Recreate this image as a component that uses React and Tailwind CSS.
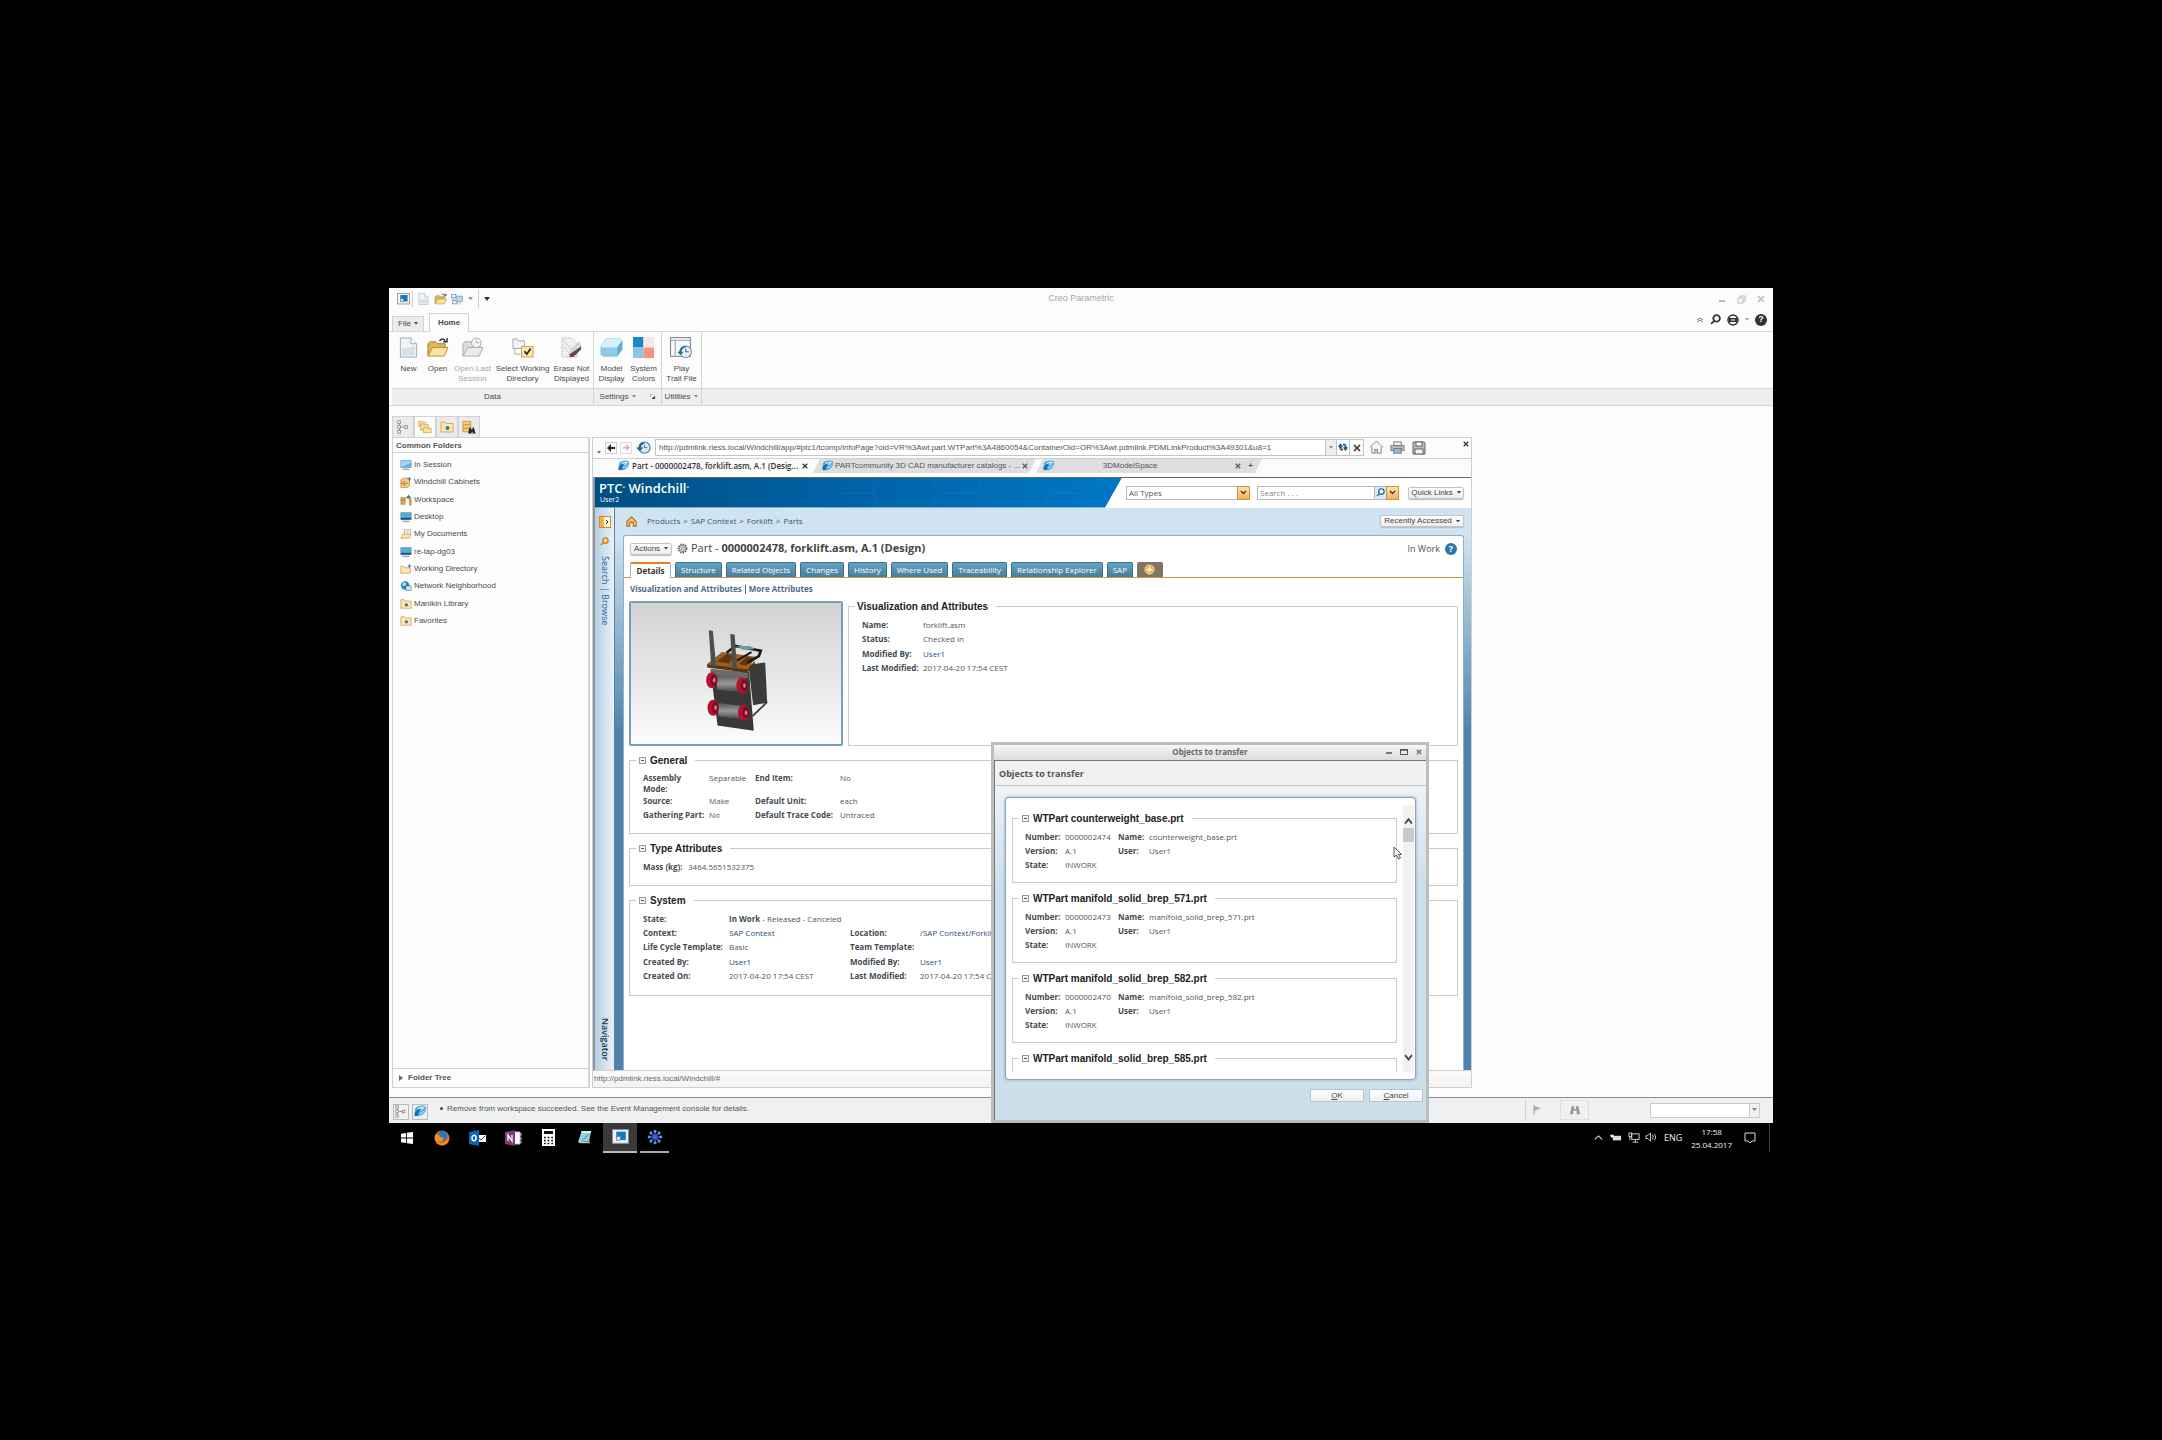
import React from "react";

const label = "font-bold text-[#444b52]";
const link = "text-[#1f4e80]";

/* ---------- small icons ---------- */
const Caret = ({ className = "w-[5px]" }) => (
  <svg viewBox="0 0 6 4" className={className} aria-hidden="true"><path d="M0 0h6L3 4z" fill="currentColor" /></svg>
);
const PageIcon = ({ className }) => (
  <svg viewBox="0 0 20 22" className={className}>
    <path d="M1.500 1h11l6 6v14h-17z" fill="#eef3f7" stroke="#9fa9b1" />
    <path d="M12.500 1v6h6" fill="#fff" stroke="#9fa9b1" />
    <path d="M3 12c5 0 9-1 14-3v10H3z" fill="#d5e0e9" />
  </svg>
);
const FolderOpen = ({ className, gray }) => (
  <svg viewBox="0 0 24 22" className={className}>
    <path d="M2 20V7l2-2h6l2 2h8v5" fill={gray ? "#dcdcdc" : "#e3b457"} stroke={gray ? "#aaa" : "#a97b2c"} />
    <path d="M2 20l5-9h16l-4 9z" fill={gray ? "#eaeaea" : "#fbe3a4"} stroke={gray ? "#aaa" : "#b98a36"} />
    {gray ? (
      <g fill="#f5f5f5" stroke="#aaa"><circle cx="16" cy="6" r="5" /><path d="M16 3v3h3" fill="none" /></g>
    ) : (
      <path d="M14 4c3-3 5-2 6 0m2-3v4h-4" fill="none" stroke="#333" strokeWidth="1.500" />
    )}
  </svg>
);
const WindowsStack = ({ className }) => (
  <svg viewBox="0 0 22 20" className={className} fill="#e8f2fa" stroke="#46799f">
    <rect x="1" y="1" width="8" height="6" /><rect x="3" y="12" width="8" height="6" /><rect x="9" y="4" width="12" height="10" rx="1" fill="#b9dbf1" />
    <path d="M14 18h4M4 7v5" />
  </svg>
);
const CreoIcon = ({ className }) => (
  <svg viewBox="0 0 16 14" className={className}>
    <rect x=".5" y=".5" width="15" height="13" fill="#f4f4f4" stroke="#8b8f93" />
    <rect x="4" y="2.500" width="9" height="8" fill="#1779bd" /><rect x="4" y="7" width="4" height="3.500" fill="#d7e6f1" stroke="#50738d" strokeWidth=".6" />
  </svg>
);
const SelectDirIcon = ({ className }) => (
  <svg viewBox="0 0 24 22" className={className}>
    <path d="M2 2h4l1 2h7v8H2z" fill="#f2f2f2" stroke="#a9a9a9" />
    <path d="M4 12v6h6" fill="none" stroke="#a9a9a9" />
    <rect x="11" y="10" width="12" height="11" fill="#fbe7a9" stroke="#c8a350" />
    <path d="M14 15l2.500 3 4-6" fill="none" stroke="#222" strokeWidth="1.800" />
  </svg>
);
const EraseIcon = ({ className }) => (
  <svg viewBox="0 0 24 22" className={className}>
    <path d="M2 1h10l6 6v14H2z" fill="#efefef" stroke="#bbb" strokeDasharray="2 1" />
    <path d="M3 3l10 11M3 10l8 8" stroke="#ccc" />
    <path d="M11 14l9-9 2 5-9 9z" fill="#d9d9d9" stroke="#aaa" strokeWidth=".6" />
    <path d="M10 18l12-8v3L14 21h-3z" fill="#5f4a4f" /><path d="M10 17l4 4h-4z" fill="#b3303d" />
  </svg>
);
const ModelIcon = ({ className }) => (
  <svg viewBox="0 0 24 20" className={className}>
    <path d="M6 1h15l2 2v9l-5 7H3l-2-2V9z" fill="#8ccbec" stroke="#6ea7c8" strokeWidth=".6" />
    <path d="M6 1h15l2 2-5 7H2l-1-1z" fill="#d7effa" /><path d="M18 10l5-7v9l-5 7z" fill="#62aedb" />
  </svg>
);
const ColorsIcon = ({ className }) => (
  <svg viewBox="0 0 20 20" className={className}>
    <rect width="10" height="10" fill="#1f86c6" /><rect x="10" width="10" height="10" fill="#f9e6e6" />
    <rect y="10" width="10" height="10" fill="#8cc3e6" /><rect x="10" y="10" width="10" height="10" fill="#f59483" />
  </svg>
);
const TrailIcon = ({ className }) => (
  <svg viewBox="0 0 22 20" className={className}>
    <rect x=".5" y=".5" width="19" height="18" fill="#f8f8f8" stroke="#7e8488" /><path d="M1 3h18M5 3v15" stroke="#9aa0a4" />
    <circle cx="15" cy="14" r="5.500" fill="#e5f0f8" stroke="#5b8fb1" /><path d="M15 8.500a5.500 5.500 0 00-6 5.500H7l3 3.500 3-3.500h-2a4 4 0 014-4z" fill="#1f6c9f" /><path d="M15 11v3h3" fill="none" stroke="#667" />
  </svg>
);
const ClockBack = ({ className }) => (
  <svg viewBox="0 0 16 14" className={className}>
    <circle cx="9" cy="7" r="6" fill="#dcebf5" stroke="#3d81a8" strokeWidth="1.200" />
    <path d="M9 1a6 6 0 00-6 6H0l4 4 4-4H5.500A4 4 0 019 3z" fill="#1d6d99" /><path d="M9 4v3h3" fill="none" stroke="#666" />
  </svg>
);
const TreeIcon = ({ className }) => (
  <svg viewBox="0 0 14 16" className={className} fill="#fff" stroke="#888">
    <path d="M3 4v9M5 8h4" /><rect x="1" y="1" width="3" height="3" /><rect x="1" y="6.500" width="3" height="3" /><rect x="1" y="12" width="3" height="3" /><rect x="9" y="6.500" width="3" height="3" />
  </svg>
);
const FoldersIcon = ({ className }) => (
  <svg viewBox="0 0 16 15" className={className} fill="#fbe2a1" stroke="#c79a44" strokeWidth=".8">
    <path d="M1 1h3l1 1h4v5H1z" /><path d="M3 4h3l1 1h5v6H3z" /><path d="M6 8h3l1 1h5v5H6z" />
  </svg>
);
const WorkFolder = ({ className }) => (
  <svg viewBox="0 0 14 12" className={className}>
    <path d="M1 3h4l1 1.500h6V11H1z" fill="#fbe8b5" stroke="#c79a44" strokeWidth=".8" /><path d="M9 2.500h4M11 .5v4" stroke="#2b7ba7" strokeWidth="1.200" />
  </svg>
);
const FavFolder = ({ className }) => (
  <svg viewBox="0 0 14 12" className={className}>
    <path d="M1 1h4l1 1.500h7V11H1z" fill="#fbe8b5" stroke="#c79a44" strokeWidth=".8" /><circle cx="7.500" cy="7" r="2" fill="#2b7ba7" />
  </svg>
);
const FindCabinet = ({ className }) => (
  <svg viewBox="0 0 16 15" className={className}>
    <path d="M1 1h9v12H1z" fill="#f3cd78" stroke="#b98a36" strokeWidth=".8" /><path d="M1 5h9M1 9h9" stroke="#b98a36" />
    <path d="M7 15l1.500-7H10v2h2V8h1.500l2 7h-3.500v-2h-1v2z" fill="#222" />
  </svg>
);
const Globe = ({ className }) => (
  <svg viewBox="0 0 14 13" className={className}>
    <path d="M1 4c2-3 7-4 11-3 2 1 1 6-1 8-3 3-8 4-10 2z" fill="#56aee2" /><path d="M4 4c2-2 5-2 8-2L8 6z" fill="#d9effb" /><path d="M1 12C-1 7 4 4 9 4 6 5 4 8 5 11z" fill="#1b6fae" /><path d="M6 9c2 0 4-1 5-3" stroke="#d9effb" fill="none" />
  </svg>
);
const Monitor = ({ className, dark }) => (
  <svg viewBox="0 0 14 12" className={className}>
    <rect x="1" y="1" width="12" height="8" fill={dark ? "#58abd8" : "#9ed8f4"} stroke="#5c8fae" strokeWidth=".8" />
    <path d={dark ? "M1 9V7h12v2z" : "M1 9L13 3v6z"} fill={dark ? "#1a4f74" : "#5cb6e4"} /><path d="M3 11h8" stroke="#889" strokeWidth="1.200" />
  </svg>
);
const Cabinet = ({ className }) => (
  <svg viewBox="0 0 14 13" className={className}>
    <path d="M1 4l3-2h7v9l-2 2H1z" fill="#f4cd82" stroke="#bb8634" strokeWidth=".8" /><path d="M1 8h8M4 6h2M4 10h2" stroke="#a06a1c" /><path d="M9 3h4M11 1v4" stroke="#2b7ba7" strokeWidth="1.200" />
  </svg>
);
const Workspace = ({ className }) => (
  <svg viewBox="0 0 14 12" className={className}>
    <path d="M1 3h5v8H1zM7 3h5v1H7zM11 4h2v8h-2z" fill="#dba956" stroke="#9c7230" strokeWidth=".6" /><path d="M1 6h5" stroke="#9c7230" /><path d="M8 2h4M10 0v4" stroke="#2b7ba7" strokeWidth="1.200" />
  </svg>
);
const DocsFolder = ({ className }) => (
  <svg viewBox="0 0 14 12" className={className}>
    <rect x="5" y="1" width="7" height="7" fill="#fff" stroke="#999" strokeWidth=".8" /><path d="M6.500 3h4M6.500 5h4" stroke="#999" strokeWidth=".6" />
    <path d="M1 11l2-5h10l-2 5z" fill="#fbe2a1" stroke="#c79a44" strokeWidth=".8" />
  </svg>
);
const NetGlobe = ({ className }) => (
  <svg viewBox="0 0 14 12" className={className}>
    <circle cx="6" cy="5.500" r="5" fill="#2c86c2" /><path d="M3 3c2-2 4-1 4 1s-3 1-4 3" fill="#bfe3f7" /><rect x="7" y="6" width="6" height="5" fill="#cfe9f8" stroke="#4b7fa3" strokeWidth=".7" />
  </svg>
);
const Gear = ({ className }) => (
  <svg viewBox="0 0 16 16" className={className} fill="none" stroke="#555">
    <circle cx="8" cy="8" r="6" strokeWidth="2.400" strokeDasharray="2 1.500" /><circle cx="8" cy="8" r="4.600" fill="#eee" /><circle cx="8" cy="8" r="2" fill="#fff" />
  </svg>
);
const Cross = ({ className = "w-[6px]" }) => (
  <svg viewBox="0 0 8 8" className={className}><path d="M1 1l6 6M7 1L1 7" stroke="currentColor" strokeWidth="1.600" /></svg>
);
const Binoculars = ({ className }) => (
  <svg viewBox="0 0 14 13" className={className} fill="currentColor"><path d="M1 12l2-9 2-1 1 1v3h2V3l1-1 2 1 2 9H9V8H5v4z" /></svg>
);

/* ---------- Creo ribbon ---------- */
function RibbonButton({ icon: Icon, lines, width, muted, gray }) {
  return (
    <button type="button" className={`${width} flex shrink-0 flex-col items-center text-[8px] leading-[10px] ${muted ? "text-[#a9a9a9]" : "text-[#4a4a4a]"}`}>
      <span className="mb-[5px] flex h-[22px] items-center"><Icon className="h-[21px] w-[23px]" gray={gray} /></span>
      {lines.map((l) => <span key={l} className="whitespace-nowrap">{l}</span>)}
    </button>
  );
}
function Group({ width, name, caret, launcher, children }) {
  return (
    <div className={`${width} flex shrink-0 flex-col border-r border-[#d4d6d8]`}>
      <div className="flex h-[56px] justify-center pt-[5px]">{children}</div>
      <div className="flex h-[17px] items-center justify-center gap-[4px] border-t border-[#d4d6d8] bg-[#eceeef] text-[8px] text-[#4a4a4a]">
        <span>{name}</span>
        {caret && <Caret className="w-[4px] text-[#888]" />}
        {launcher && <svg viewBox="0 0 6 6" className="ml-[10px] w-[5px]"><path d="M0 0v4M0 0h3" stroke="#777" /><path d="M6 6H2l4-4z" fill="#333" /></svg>}
      </div>
    </div>
  );
}

function CreoHeader() {
  return (
    <header>
      <div className="grid h-[26px] grid-cols-[1fr_auto_1fr] items-center px-[8px] pb-[3px]">
        <div className="flex items-center text-[#555]">
          <CreoIcon className="w-[13px]" />
          <span className="ml-[2px] h-[16px] border-l border-[#ccc]" />
          <PageIcon className="ml-[5px] h-[12px]" />
          <FolderOpen className="ml-[5px] h-[12px]" />
          <WindowsStack className="ml-[4px] h-[11px]" />
          <Caret className="ml-[5px] w-[5px] text-[#999]" />
          <span className="ml-[5px] h-[18px] border-l border-[#ccc]" />
          <Caret className="ml-[5px] w-[6px] text-[#333]" />
        </div>
        <h1 className="text-[9px] text-[#a6a6a6]">Creo Parametric</h1>
        <div className="flex items-center justify-end gap-[11px] text-[#bbb]">
          <button type="button" aria-label="Minimize"><svg viewBox="0 0 8 8" className="w-[8px]"><path d="M1 6h6" stroke="currentColor" strokeWidth="2" /></svg></button>
          <button type="button" aria-label="Restore"><svg viewBox="0 0 9 9" className="w-[9px]" fill="none" stroke="currentColor"><rect x="3" y="1" width="5" height="5" /><rect x="1" y="3" width="5" height="5" fill="#fcfcfc" /></svg></button>
          <button type="button" aria-label="Close"><Cross className="w-[8px]" /></button>
        </div>
      </div>
      <div className="flex h-[18px] items-end border-b border-[#d4d6d8] pl-[3px] text-[8px] text-[#4a4a4a]">
        <button type="button" className="flex h-[15px] w-[32px] items-center justify-center gap-[3px] border border-b-0 border-[#d0d2d4] bg-[#eaebec]">File <Caret className="w-[4px]" /></button>
        <button type="button" className="-mb-px ml-[5px] h-[19px] w-[40px] border border-b-0 border-[#d0d2d4] bg-[#fcfcfc] font-bold">Home</button>
        <div className="ml-auto flex items-center gap-[6px] self-start pr-[6px] text-[#333]">
          <svg viewBox="0 0 8 6" className="w-[8px]" fill="none" stroke="#777"><path d="M1 3l3-2 3 2M1 5l3-2 3 2" /></svg>
          <svg viewBox="0 0 10 10" className="w-[11px]" fill="none" stroke="currentColor" strokeWidth="1.600"><circle cx="6" cy="4" r="3" /><path d="M4 6L1 9" /></svg>
          <svg viewBox="0 0 12 12" className="w-[12px]"><circle cx="6" cy="6" r="5" fill="none" stroke="currentColor" strokeWidth="1.500" /><path d="M2 4h8v4H2z" fill="currentColor" /><path d="M4 6h4" stroke="#fff" /></svg>
          <Caret className="w-[4px] text-[#999]" />
          <span className="grid size-[12px] place-items-center rounded-full bg-[#333] text-[9px] font-bold leading-none text-white">?</span>
        </div>
      </div>
      <div className="flex border-b border-[#d4d6d8] pl-[3px]">
        <Group width="w-[202px]" name="Data">
          <RibbonButton icon={PageIcon} lines={["New"]} width="w-[30px]" />
          <RibbonButton icon={FolderOpen} lines={["Open"]} width="w-[28px]" />
          <RibbonButton icon={FolderOpen} gray muted lines={["Open Last", "Session"]} width="w-[42px]" />
          <RibbonButton icon={SelectDirIcon} lines={["Select Working", "Directory"]} width="w-[58px]" />
          <RibbonButton icon={EraseIcon} lines={["Erase Not", "Displayed"]} width="w-[40px]" />
        </Group>
        <Group width="w-[68px]" name="Settings" caret launcher>
          <RibbonButton icon={ModelIcon} lines={["Model", "Display"]} width="w-[32px]" />
          <RibbonButton icon={ColorsIcon} lines={["System", "Colors"]} width="w-[32px]" />
        </Group>
        <Group width="w-[40px]" name="Utilities" caret>
          <RibbonButton icon={TrailIcon} lines={["Play", "Trail File"]} width="w-[38px]" />
        </Group>
        <div className="flex flex-1 flex-col"><div className="h-[56px]" /><div className="h-[17px] border-t border-[#d4d6d8] bg-[#eceeef]" /></div>
      </div>
    </header>
  );
}

/* ---------- Navigator pane ---------- */
const DarkMonitor = (p) => <Monitor {...p} dark />;
const folders = [
  ["In Session", Monitor], ["Windchill Cabinets", Cabinet], ["Workspace", Workspace], ["Desktop", DarkMonitor],
  ["My Documents", DocsFolder], ["re-lap-dg03", DarkMonitor], ["Working Directory", WorkFolder],
  ["Network Neighborhood", NetGlobe], ["Manikin Library", FavFolder], ["Favorites", FavFolder],
];
function LeftPane() {
  const tabs = [TreeIcon, FoldersIcon, FavFolder, FindCabinet];
  return (
    <aside className="ml-[3px] flex w-[198px] shrink-0 flex-col">
      <div className="flex h-[21px]">
        {tabs.map((T, i) => (
          <button key={i} type="button" aria-label={"Navigator tab " + (i + 1)} className={`grid w-[22px] place-items-center border border-b-0 border-[#d0d2d4] ${i === 1 ? "bg-[#fcfcfc]" : "bg-[#ebebec]"}`}>
            <T className="h-[14px] w-[14px]" />
          </button>
        ))}
      </div>
      <div className="flex flex-1 flex-col border border-[#d0d2d4] border-r-2 bg-[#fdfdfd]">
        <h2 className="h-[15px] border-b border-[#d0d2d4] pl-[3px] text-[8px] font-bold leading-[15px] text-[#555]">Common Folders</h2>
        <ul className="mt-[4px] grid h-[173px] grid-rows-10 pl-[7px] text-[8px] text-[#4a4a4a]">
          {folders.map(([name, Icon]) => (
            <li key={name} className="flex items-center gap-[2px]"><Icon className="h-[12px] w-[12px]" /><a href="#" className="leading-[12px]">{name}</a></li>
          ))}
        </ul>
        <button type="button" className="mt-auto flex h-[19px] items-center gap-[5px] border-t border-[#d0d2d4] pl-[6px] text-[8px] font-bold text-[#555]">
          <svg viewBox="0 0 4 6" className="w-[4px]"><path d="M0 0l4 3-4 3z" fill="#666" /></svg>Folder Tree
        </button>
      </div>
    </aside>
  );
}

/* ---------- Embedded browser ---------- */
const URL_TEXT = "http://pdmlink.riess.local/Windchill/app/#ptc1/tcomp/infoPage?oid=VR%3Awt.part.WTPart%3A4860054&ContainerOid=OR%3Awt.pdmlink.PDMLinkProduct%3A49301&u8=1";
const grayTab = "flex h-[14px] items-center bg-[#dedede] [clip-path:polygon(7px_0,100%_0,calc(100%-7px)_100%,0_100%)]";
function BrowserChrome() {
  return (
    <>
      <div className="flex h-[21px] items-center border-b border-[#cfcfcf] text-[#333]">
        <Caret className="ml-[4px] mt-[10px] w-[4px] text-[#777]" />
        <button type="button" aria-label="Back" className="ml-[4px] grid size-[12px] place-items-center border border-[#ccc]"><svg viewBox="0 0 8 8" className="w-[8px]"><path d="M0 4l4-4v3h4v2H4v3z" fill="#222" /></svg></button>
        <button type="button" aria-label="Forward" className="ml-[3px] grid size-[12px] place-items-center border border-[#ddd]"><svg viewBox="0 0 8 8" className="w-[7px]"><path d="M8 4L4 0v3H0v2h4v3z" fill="#bbb" /></svg></button>
        <ClockBack className="mx-[4px] w-[15px]" />
        <input aria-label="Address" defaultValue={URL_TEXT} className="h-[17px] min-w-0 flex-1 border border-[#c4c4c4] bg-white px-[3px] text-[8px] text-[#555]" />
        <button type="button" aria-label="Address history" className="grid h-[17px] w-[11px] place-items-center border border-l-0 border-[#c4c4c4] bg-[#eee] text-[#888]"><Caret className="w-[4px]" /></button>
        <button type="button" aria-label="Refresh" className="grid h-[17px] w-[13px] place-items-center border border-l-0 border-[#c4c4c4]"><svg viewBox="0 0 12 10" className="w-[10px]" fill="none" stroke="#1b5c86" strokeWidth="2"><path d="M3 8V4m-2 1l2-3 2 3M3 8h3M9 2v4m2-1L9 8 7 5M9 2H6" /></svg></button>
        <button type="button" aria-label="Stop" className="grid h-[17px] w-[14px] place-items-center border border-l-0 border-[#c4c4c4]"><Cross className="w-[8px]" /></button>
        <svg viewBox="0 0 16 15" className="ml-[5px] w-[15px]" fill="#f4f4f4" stroke="#888"><path d="M1 8l7-7 7 7M3 7v7h10V7" /><path d="M6 14v-4h3v4" fill="#ccc" /></svg>
        <svg viewBox="0 0 16 14" className="ml-[6px] w-[15px]" fill="#eee" stroke="#777"><rect x="4" y="1" width="8" height="4" /><rect x="1" y="5" width="14" height="5" fill="#bbb" /><rect x="4" y="8" width="8" height="5" fill="#8dbddb" /></svg>
        <svg viewBox="0 0 14 14" className="ml-[7px] w-[14px]" fill="#bbb" stroke="#666"><path d="M1 1h11l1 1v11H1z" /><rect x="4" y="1" width="6" height="4" fill="#fff" /><rect x="3" y="8" width="8" height="5" fill="#f4f4f4" /></svg>
        <button type="button" aria-label="Close browser" className="ml-[37px] mr-[2px] mb-[8px]"><Cross className="w-[6px]" /></button>
      </div>
      <div className="flex h-[15px] items-center whitespace-nowrap pl-[23px] text-[8px] text-[#555]">
        <div className="flex w-[197px] items-center pl-[2px] font-['Open_Sans'] font-semibold text-[#333]">
          <Globe className="mr-[2px] w-[12px]" /><span className="flex-1">Part - 0000002478, forklift.asm, A.1 (Desig...</span><Cross className="mr-[5px] w-[6px]" />
        </div>
        <div className={`${grayTab} w-[223px] pl-[9px] pr-[8px]`}>
          <Globe className="mr-px w-[12px]" /><span className="flex-1">PARTcommunity 3D CAD manufacturer catalogs - ...</span><Cross className="w-[6px]" />
        </div>
        <div className={`${grayTab} w-[226px] pl-[7px]`}>
          <Globe className="w-[12px]" /><span className="flex-1 pr-[30px] text-center">3DModelSpace</span><Cross className="mr-[7px] w-[6px]" />
          <span className="pr-[9px] font-bold">+</span>
        </div>
      </div>
    </>
  );
}

const smallBtn = "flex items-center justify-center gap-[4px] rounded-[2px] border border-[#c2c6ca] bg-gradient-to-b from-white to-[#ececec] text-[8px] text-[#444] shadow-[0_1px_1px_#bbb]";
const orangeBtn = "grid w-[13px] place-items-center border border-[#c9933f] bg-gradient-to-b from-[#fde3b0] to-[#f3b256] text-[#333]";
const Chevron = () => <svg viewBox="0 0 8 6" className="w-[7px]"><path d="M1 1l3 3 3-3" fill="none" stroke="#333" strokeWidth="1.500" /></svg>;

function Banner() {
  return (
    <div className="flex h-[31px] border-t border-[#666] bg-white">
      <div className="relative flex flex-1 flex-col bg-gradient-to-r from-[#004f82] via-[#0063a8] to-[#0077c4] pl-[4px] pt-[2px] text-white [clip-path:polygon(0_0,100%_0,calc(100%-17px)_100%,0_100%)]">
        <svg viewBox="0 0 300 30" className="absolute right-0 top-0 h-full w-[300px]" fill="none" stroke="#3b9fdf" strokeOpacity=".2"><path d="M20 15h30l8-14M50 15l8 14M110 1l8 14h35l8-14M118 15l-8 14M153 15l8 14M220 1l8 14h45l8-14M228 15l-8 14" /></svg>
        <div className="font-['Open_Sans'] text-[13px] font-semibold leading-[16px]">PTC<sup className="text-[6px]">°</sup> Windchill<sup className="text-[6px]">°</sup></div>
        <div className="pl-px font-['Open_Sans'] text-[7px] leading-[8px]">User2</div>
      </div>
      <div className="flex shrink-0 items-center pr-[7px] font-['Open_Sans'] text-[#555]">
        <label className="ml-[4px] flex h-[14px] w-[124px]">
          <select aria-label="Object type" className="min-w-0 flex-1 appearance-none border border-r-0 border-[#b5b8c8] bg-white px-[2px] text-[8px] leading-[12px]"><option>All Types</option></select>
          <span className={orangeBtn}><Chevron /></span>
        </label>
        <div className="ml-[7px] flex h-[14px] w-[142px]">
          <input aria-label="Search" placeholder="Search . . ." className="min-w-0 flex-1 border border-r-0 border-[#b5b8c8] bg-white px-[2px] text-[8px] placeholder:text-[#888]" />
          <button type="button" aria-label="Run search" className="grid w-[12px] place-items-center border border-r-0 border-[#b5b8c8] bg-[#dce9f4]"><svg viewBox="0 0 10 10" className="w-[9px]" fill="#fff" stroke="#2b6ca3" strokeWidth="1.500"><circle cx="6" cy="4" r="3" /><path d="M4 6L1 9" /></svg></button>
          <button type="button" aria-label="Search options" className={orangeBtn}><Chevron /></button>
        </div>
        <button type="button" className={`${smallBtn} ml-[9px] h-[12px] w-[56px] font-['Liberation_Sans']`}>Quick Links <Caret className="w-[4px]" /></button>
      </div>
    </div>
  );
}

function Legend({ children, collapsible = true }) {
  return (
    <legend className="ml-[6px] h-[12px] pl-[2px] pr-[8px] font-['Liberation_Sans'] text-[10px] font-bold leading-[12px] text-[#222]">
      <span className="flex items-center gap-[4px]">
        {collapsible && <button type="button" aria-label="Collapse" className="ml-px"><svg viewBox="0 0 7 7" className="block w-[7px]"><rect x=".5" y=".5" width="6" height="6" fill="#f5f5f5" stroke="#999" /><path d="M2 3.500h3" stroke="#555" /></svg></button>}
        {children}
      </span>
    </legend>
  );
}

const wcTabs = ["Structure", "Related Objects", "Changes", "History", "Where Used", "Traceability", "Relationship Explorer", "SAP"];

function Forklift() {
  return (
    <svg viewBox="35 42 626 416" className="h-full w-full" role="img" aria-label="forklift.asm preview">
      <defs><linearGradient id="axle" x1="0" x2="0" y1="0" y2="1"><stop offset="0" stopColor="#555" /><stop offset=".5" stopColor="#999" /><stop offset="1" stopColor="#444" /></linearGradient></defs>
      <path d="M385 225l50-8 6 120-42 8z" fill="#3b3b3b" />
      <path d="M441 335l-44 42" stroke="#333" strokeWidth="5" />
      <path d="M272 238l115 8 14 175-108-16z" fill="#383838" />
      <path d="M275 236l108 12 0 16-110-8z" fill="#6b6b6b" />
      <path d="M262 222l44-36 100 14-24 42z" fill="#9a5f25" />
      <path d="M290 214l30-22 30 4-24 24zM356 222l24-22 18 3-20 24z" fill="#5f3711" />
      <path d="M262 222l120 16 22-26v8l-22 28-120-16z" fill="#5c3410" />
      <path d="M320 188l26-20 76 14-6 16-34 20" fill="none" stroke="#1b1b1b" strokeWidth="8" />
      <path d="M350 168l40 0 14 10-34 2z" fill="#6f9c99" />
      <path d="M350 212l44-26" stroke="#111" strokeWidth="6" />
      <path d="M267 121l12 2 10 107-15-2z" fill="#4b4f52" /><path d="M331 132l13 2 7 102-14-2z" fill="#4b4f52" />
      <path d="M290 254l72 8-2 44-68-8z" fill="url(#axle)" /><path d="M294 338l70 8-2 40-66-8z" fill="url(#axle)" />
      {[[276, 270], [366, 286], [280, 352], [371, 367]].map(([x, y]) => (
        <g key={x + "-" + y}><ellipse cx={x} cy={y} rx="17" ry="24" fill="#b3122f" /><ellipse cx={x + 6} cy={y} rx="10" ry="17" fill="#7d0b20" /><ellipse cx={x + 7} cy={y} rx="4" ry="7" fill="#b88" /></g>
      ))}
    </svg>
  );
}

const fs = "min-w-0 border border-[#c9c9c9] px-0 pt-[5px] pb-[11px]";

function PartPage() {
  return (
    <div className="flex min-h-0 flex-1 flex-col font-['Open_Sans'] text-[8px]">
      <div className="flex h-[27px] shrink-0 items-center pl-[3px] text-[#2b5b88]">
        <svg viewBox="0 0 12 12" className="w-[11px]"><path d="M1 6l5-5 5 5v5H8V7H4v4H1z" fill="#f6c477" stroke="#b06d1c" strokeWidth="1.200" /></svg>
        <nav className="ml-[10px] flex gap-[3px]">
          <a href="#">Products</a><span>&gt;</span><a href="#">SAP Context</a><span>&gt;</span><a href="#">Forklift</a><span>&gt;</span><a href="#">Parts</a>
        </nav>
        <button type="button" className={`${smallBtn} ml-auto h-[12px] w-[84px] font-['Liberation_Sans']`}>Recently Accessed <Caret className="w-[4px]" /></button>
      </div>
      <main className="flex-1 rounded-t-[3px] border border-b-0 border-[#8fb0c6] bg-white">
        <div className="flex h-[26px] items-center pl-[6px] pr-[6px] text-[#555]">
          <button type="button" className={`${smallBtn} h-[12px] w-[42px] font-['Liberation_Sans']`}>Actions <Caret className="w-[4px]" /></button>
          <Gear className="ml-[5px] w-[11px]" />
          <h2 className="ml-[3px] text-[11px] text-[#444]">Part - <b>0000002478, forklift.asm, A.1 (Design)</b></h2>
          <span className="ml-auto text-[9px]">In Work</span>
          <span className="ml-[5px] grid size-[12px] place-items-center rounded-full bg-[#2f77a8] text-[9px] font-bold leading-none text-white">?</span>
        </div>
        <div className="flex h-[16px] items-end gap-[4px] border-b border-[#c69a45] pl-[6px]">
          <button type="button" className="-mb-px h-[16px] w-[41px] rounded-t-[2px] border border-b-0 border-t-2 border-[#9fb4c3] border-t-[#f07d1c] bg-white font-bold text-[#333]">Details</button>
          {wcTabs.map((t) => (
            <button key={t} type="button" className="h-[15px] whitespace-nowrap rounded-t-[2px] border border-b-0 border-[#37718f] bg-gradient-to-b from-[#6aa2bd] to-[#417f9f] px-[5px] text-white">{t}</button>
          ))}
          <button type="button" aria-label="Add tab" className="grid h-[15px] w-[26px] place-items-center rounded-t-[2px] bg-[#7d7568]"><svg viewBox="0 0 12 12" className="w-[11px]"><circle cx="6" cy="6" r="5" fill="#f6a93c" stroke="#ffe0ac" /><path d="M6 3v6M3 6h6" stroke="#fff" strokeWidth="1.500" /></svg></button>
        </div>
        <div className="flex h-[23px] items-center pl-[6px] font-bold text-[#4a6c88]">
          <a href="#">Visualization and Attributes</a><span className="mx-[3px] h-[9px] border-l border-[#666]" /><a href="#">More Attributes</a>
        </div>
        <div className="flex flex-col gap-[9px] px-[5px] text-[#555]">
          <div className="flex gap-[5px]">
            <div className="h-[145px] w-[214px] shrink-0 rounded-[2px] border-2 border-[#76a0b8] bg-gradient-to-b from-[#d2d2d2] to-[#fcfcfc]"><Forklift /></div>
            <fieldset className={`${fs} flex-1`}>
              <Legend collapsible={false}>Visualization and Attributes</Legend>
              <dl className="grid h-[58px] grid-cols-[61px_1fr] grid-rows-4 items-center pl-[13px]">
                <dt className={label}>Name:</dt><dd>forklift.asm</dd>
                <dt className={label}>Status:</dt><dd>Checked in</dd>
                <dt className={label}>Modified By:</dt><dd className={link}>User1</dd>
                <dt className={label}>Last Modified:</dt><dd>2017-04-20 17:54 CEST</dd>
              </dl>
            </fieldset>
          </div>
          <fieldset className={fs}>
            <Legend>General</Legend>
            <dl className="grid grid-cols-[66px_46px_85px_1fr] pl-[13px] leading-[14px]">
              <dt className={`${label} h-[22px] leading-[11px]`}>Assembly<br />Mode:</dt><dd className="leading-[11px]">Separable</dd><dt className={`${label} leading-[11px]`}>End Item:</dt><dd className="leading-[11px]">No</dd>
              <dt className={label}>Source:</dt><dd>Make</dd><dt className={label}>Default Unit:</dt><dd>each</dd>
              <dt className={label}>Gathering Part:</dt><dd>No</dd><dt className={`${label} whitespace-nowrap`}>Default Trace Code:</dt><dd>Untraced</dd>
            </dl>
          </fieldset>
          <fieldset className={fs}>
            <Legend>Type Attributes</Legend>
            <dl className="grid grid-cols-[45px_1fr] pl-[13px] leading-[14px]"><dt className={label}>Mass (kg):</dt><dd>3464.5651532375</dd></dl>
          </fieldset>
          <fieldset className={fs}>
            <Legend>System</Legend>
            <dl className="grid h-[72px] grid-cols-[86px_121px_70px_1fr] grid-rows-5 items-center whitespace-nowrap pl-[13px]">
              <dt className={label}>State:</dt><dd className="col-span-3"><b className="text-[#444b52]">In Work</b> - Released - Canceled</dd>
              <dt className={label}>Context:</dt><dd className={link}>SAP Context</dd><dt className={label}>Location:</dt><dd className={link}>/SAP Context/Forklift</dd>
              <dt className={label}>Life Cycle Template:</dt><dd>Basic</dd><dt className={label}>Team Template:</dt><dd />
              <dt className={label}>Created By:</dt><dd className={link}>User1</dd><dt className={label}>Modified By:</dt><dd className={link}>User1</dd>
              <dt className={label}>Created On:</dt><dd>2017-04-20 17:54 CEST</dd><dt className={label}>Last Modified:</dt><dd>2017-04-20 17:54 CEST</dd>
            </dl>
          </fieldset>
        </div>
      </main>
    </div>
  );
}

function Browser() {
  return (
    <section className="mt-[21px] mr-[301px] ml-[2px] flex min-w-0 flex-1 flex-col border border-[#cfcfcf]">
      <BrowserChrome />
      <div className="mt-[3px] flex flex-1 flex-col border-l-2 border-[#8e9499]">
        <Banner />
        <div className="flex flex-1 bg-[#cfe3f0]">
          <div className="flex w-[20px] shrink-0 flex-col items-center border-r border-[#5c7f9c] bg-gradient-to-r from-[#b3cfe3] to-[#e8f2f9] pt-[8px] font-['Open_Sans'] text-[9px]">
            <svg viewBox="0 0 12 12" className="w-[12px]"><rect x=".5" y=".5" width="11" height="11" fill="#fff3dc" stroke="#d08a2c" /><rect x="1" y="1" width="4" height="10" fill="#f3ae4e" /><path d="M7 4l2 2-2 2" fill="none" stroke="#333" /></svg>
            <svg viewBox="0 0 10 10" className="mt-[9px] w-[9px]" fill="#fbd18c" stroke="#c97f22" strokeWidth="1.500"><circle cx="6" cy="4" r="3" /><path d="M4 6L1 9" /></svg>
            <span className="mt-[10px] leading-[12px] text-[#2f659b] [writing-mode:vertical-rl]">Search | Browse</span>
            <span className="mt-auto mb-[9px] font-semibold leading-[12px] text-[#24384a] [writing-mode:vertical-rl]">Navigator</span>
          </div>
          <div className="flex min-w-0 flex-1 bg-gradient-to-b from-[#cfe3f0] from-5% to-[#4f83ac] to-40%">
            <div className="flex min-w-0 flex-1 flex-col bg-[linear-gradient(#cfe3f0,#cfe3f0)] bg-[length:100%_27px] bg-no-repeat pl-[8px] pr-[7px]"><PartPage /></div>
          </div>
        </div>
      </div>
      <div className="h-[17px] border-t border-[#cfcfcf] bg-gradient-to-b from-[#fbfbfb] to-[#f3f3f3] pl-px text-[8px] leading-[16px] text-[#666]">http://pdmlink.riess.local/Windchill/#</div>
    </section>
  );
}

/* ---------- Transfer dialog ---------- */
const parts = [
  ["counterweight_base.prt", "0000002474"], ["manifold_solid_brep_571.prt", "0000002473"],
  ["manifold_solid_brep_582.prt", "0000002470"], ["manifold_solid_brep_585.prt", null],
];
function Dialog() {
  return (
    <div role="dialog" aria-label="Objects to transfer" className="absolute bottom-0 left-[602px] w-[438px] border-[3px] border-[#bdbdbd] bg-[#cddfea] font-['Open_Sans'] text-[8px]">
      <div className="grid h-[16px] grid-cols-[1fr_auto_1fr] items-center border-b border-[#777] bg-gradient-to-b from-[#f6f6f6] to-[#dcdcdc] text-[#666]">
        <span />
        <span className="font-bold">Objects to transfer</span>
        <span className="flex items-center justify-end gap-[8px] pr-[4px]">
          <button type="button" aria-label="Minimize"><svg viewBox="0 0 6 6" className="w-[6px]"><path d="M0 4h6" stroke="#555" strokeWidth="1.500" /></svg></button>
          <button type="button" aria-label="Maximize"><svg viewBox="0 0 8 6" className="w-[8px]"><rect x=".5" y=".5" width="7" height="5" fill="none" stroke="#555" /><path d="M0 1h8" stroke="#555" strokeWidth="1.500" /></svg></button>
          <button type="button" aria-label="Close"><Cross className="w-[6px]" /></button>
        </span>
      </div>
      <h2 className="h-[25px] border-b border-l border-[#c4c4c4] border-l-[#777] bg-[#f1f1f1] pl-[4px] text-[9px] font-bold leading-[25px] text-[#555]">Objects to transfer</h2>
      <div className="border-l border-[#777] bg-gradient-to-b from-[#eef3f7] via-[#cddfeb] via-30% to-[#cddfea] px-[10px] pt-[11px]">
        <div className="flex rounded-[4px] border border-[#8ea5b8] bg-white py-[7px] pl-[6px] shadow-[0_0_3px_#7ba0bf]">
          <div className="flex h-[267px] flex-1 flex-col gap-[10px] overflow-hidden pt-[8px]">
            {parts.map(([name, number]) => (
              <fieldset key={name} className="h-[70px] min-w-0 shrink-0 border border-[#c9c9c9] pt-[5px] text-[#555]">
                <Legend>WTPart {name}</Legend>
                {number && (
                  <dl className="grid h-[43px] grid-cols-[40px_53px_31px_1fr] grid-rows-3 items-center pl-[12px]">
                    <dt className={label}>Number:</dt><dd>{number}</dd><dt className={label}>Name:</dt><dd>{name}</dd>
                    <dt className={label}>Version:</dt><dd>A.1</dd><dt className={label}>User:</dt><dd>User1</dd>
                    <dt className={label}>State:</dt><dd>INWORK</dd>
                  </dl>
                )}
              </fieldset>
            ))}
          </div>
          <div className="ml-[6px] mr-px flex w-[11px] flex-col items-center bg-[#f1f1f1] pt-[13px] pb-[11px]">
            <svg viewBox="0 0 8 6" className="w-[9px]"><path d="M1 5l3-4 3 4" fill="none" stroke="#444" strokeWidth="1.500" /></svg>
            <span className="mt-[4px] h-[14px] w-full bg-[#c9c9c9]" />
            <svg viewBox="0 0 8 6" className="mt-auto w-[9px]"><path d="M1 1l3 4 3-4" fill="none" stroke="#444" strokeWidth="1.500" /></svg>
          </div>
        </div>
        <div className="-mr-[7px] flex justify-end gap-[5px] pt-[9px] pb-[18px] font-['Liberation_Sans'] text-[#444]">
          {["OK", "Cancel"].map((b) => (
            <button key={b} type="button" className="h-[13px] w-[54px] border border-[#b9c4cc] bg-gradient-to-b from-white to-[#eef1f3] leading-[11px]"><u>{b[0]}</u>{b.slice(1)}</button>
          ))}
        </div>
      </div>
      <svg viewBox="0 0 9 14" className="absolute right-[24px] top-[101px] w-[9px]"><path d="M1 1v10l2.500-2L5.500 13l2-1-2-3.500H8.500z" fill="#fff" stroke="#444" strokeWidth=".9" /></svg>
    </div>
  );
}

function StatusBar() {
  return (
    <footer className="flex h-[26px] items-center border-t border-[#8b8b8b] bg-[#eff0f1] pl-[4px] pr-[13px] text-[8px] text-[#555]">
      <button type="button" aria-label="Toggle navigator" className="mt-[3px] grid size-[16px] place-items-center border border-[#bbb]"><TreeIcon className="h-[13px]" /></button>
      <button type="button" aria-label="Toggle browser" className="mt-[3px] ml-[3px] grid size-[16px] place-items-center border border-[#bbb]"><Globe className="w-[13px]" /></button>
      <span className="ml-[12px] mb-[3px] size-[3px] rounded-full bg-[#1f4f7a]" />
      <span className="mb-[3px] ml-[4px]">Remove from workspace succeeded. See the Event Management console for details.</span>
      <span className="ml-auto h-[22px] border-l border-[#d5d5d5]" />
      <svg viewBox="0 0 8 10" className="mx-[7px] w-[8px]"><path d="M1 0v10" stroke="#999" /><path d="M1 1l7 2-7 3z" fill="#aaa" /></svg>
      <button type="button" aria-label="Find" className="ml-[12px] grid h-[20px] w-[29px] place-items-center border border-[#e0e0e0] text-[#999]"><Binoculars className="w-[12px]" /></button>
      <select aria-label="Selection filter" className="ml-[61px] h-[15px] w-[100px] appearance-none border border-[#ccc] bg-white"><option></option></select>
      <span className="grid h-[15px] w-[10px] place-items-center border border-l-0 border-[#ccc] bg-[#f2f2f2] text-[#888]"><Caret className="w-[5px]" /></span>
    </footer>
  );
}

/* ---------- Windows taskbar ---------- */
function Taskbar() {
  const icons = [
    ["Start", <svg viewBox="0 0 14 14" className="w-[12px]"><path d="M0 2l6-.8v5.300H0zM7 1l7-1v6.500H7zM0 7.500h6v5.300L0 12zM7 7.500h7V14l-7-1z" fill="#fff" /></svg>],
    ["Firefox", <svg viewBox="0 0 16 16" className="w-[16px]"><circle cx="8" cy="8" r="7.500" fill="#e66a1c" /><circle cx="8.500" cy="6" r="5" fill="#2c76b8" /><path d="M1 5c3-1 5 0 5 2 3 0 4 1 3 3-2 2-5 1-6-1 0 3 3 5 7 4 3-1 4-4 4-7 2 4 0 9-6 9.500C3 15 0 10 1 5z" fill="#f4902b" /></svg>],
    ["Outlook", <svg viewBox="0 0 17 16" className="w-[17px]"><rect x="8" y="5" width="9" height="7" fill="#fff" /><path d="M10 8l2 2 4-4" fill="none" stroke="#0a63b5" /><path d="M0 2l10-2v16L0 14z" fill="#0a63b5" /><ellipse cx="5" cy="8" rx="2" ry="2.700" fill="none" stroke="#fff" strokeWidth="1.500" /></svg>],
    ["OneNote", <svg viewBox="0 0 17 16" className="w-[17px]"><path d="M9 2h6v12H9zM16 3v3M16 7v3M16 11v2" fill="#fff" stroke="#d9b8d6" /><path d="M0 2l10-2v16L0 14z" fill="#80397b" /><path d="M3 11V5l4 6V5" fill="none" stroke="#fff" strokeWidth="1.300" /></svg>],
    ["Calculator", <svg viewBox="0 0 13 17" className="h-[17px]"><rect width="13" height="17" fill="#fff" /><path d="M2 2h9v3H2z" fill="#111" /><path d="M2 8.500h9M2 11.500h9M2 14.500h9" stroke="#111" strokeWidth="1.600" strokeDasharray="1.800 1.800" /></svg>],
    ["Notepad", <svg viewBox="0 0 16 15" className="w-[15px]"><path d="M5 1h10l-2 11-12 1z" fill="#8fcfe0" /><path d="M5 1h10v2H4z" fill="#e7f4f8" /><path d="M1 13l12-1 1 2H3z" fill="#cdbb9b" /><path d="M12 5L6 11" stroke="#3a87a0" /></svg>],
  ];
  return (
    <div className="flex h-[30px] items-stretch bg-black font-['Open_Sans'] text-[8px] text-[#f0f0f0]">
      <div className="flex w-[249px] justify-between pr-[36px]">
        {icons.map(([n, i]) => <button key={n} type="button" aria-label={n} className="grid w-[36px] place-items-center">{i}</button>)}
      </div>
      <button type="button" aria-label="Creo" className="-ml-[35px] grid w-[34px] place-items-center border-b-2 border-[#bbb] bg-[#3a3a3a]"><CreoIcon className="w-[17px]" /></button>
      <button type="button" aria-label="Flower" className="ml-[3px] grid w-[29px] place-items-center border-b-2 border-[#aaa]">
        <svg viewBox="0 0 16 16" className="w-[16px]" fill="#5b93ea" stroke="#3f74d0">{[0, 45, 90, 135, 180, 225, 270, 315].map((a) => <g key={a} transform={`rotate(${a} 8 8)`}><path d="M8 8V3" strokeWidth="1.300" /><circle cx="8" cy="2.200" r="1.500" stroke="none" /></g>)}</svg>
      </button>
      <div className="ml-auto flex items-center pr-[3px]">
        <svg viewBox="0 0 10 6" className="w-[9px]"><path d="M1 5l4-4 4 4" fill="none" stroke="#ddd" strokeWidth="1.200" /></svg>
        <svg viewBox="0 0 13 9" className="ml-[7px] w-[12px]"><rect x="3" y="3" width="9" height="5" fill="#ddd" /><path d="M0 2h4v3H1z" fill="#eee" /></svg>
        <svg viewBox="0 0 13 12" className="ml-[6px] w-[12px]" fill="none" stroke="#ddd"><rect x="4" y="2" width="8" height="6" /><path d="M8 8v3M5 11h6M1 1h3v4H1zM2 5v4" /></svg>
        <svg viewBox="0 0 13 11" className="ml-[5px] w-[12px]" fill="none" stroke="#ddd"><path d="M1 4h2l3-3v9L3 7H1zM8 3c1 2 1 3 0 5M10 2c2 2 2 5 0 7" /></svg>
        <span className="ml-[7px] text-[9px]">ENG</span>
        <span className="ml-[9px] text-center leading-[13px]">17:58<br />25.04.2017</span>
        <svg viewBox="0 0 12 12" className="ml-[12px] w-[12px]" fill="none" stroke="#ddd"><path d="M1 1h10v8H8l-2 2-2-2H1z" /></svg>
        <span className="ml-[13px] h-[28px] border-l border-[#444]" />
      </div>
    </div>
  );
}

export default function App() {
  return (
    <div className="flex min-h-screen flex-col justify-center bg-black px-[389px] font-['Liberation_Sans',sans-serif]">
      <div className="relative flex flex-col bg-[#fcfcfc]">
        <CreoHeader />
        <div className="mt-[10px] flex min-h-[681px] pb-[9px]">
          <LeftPane />
          <Browser />
        </div>
        <StatusBar />
        <Dialog />
      </div>
      <Taskbar />
    </div>
  );
}
